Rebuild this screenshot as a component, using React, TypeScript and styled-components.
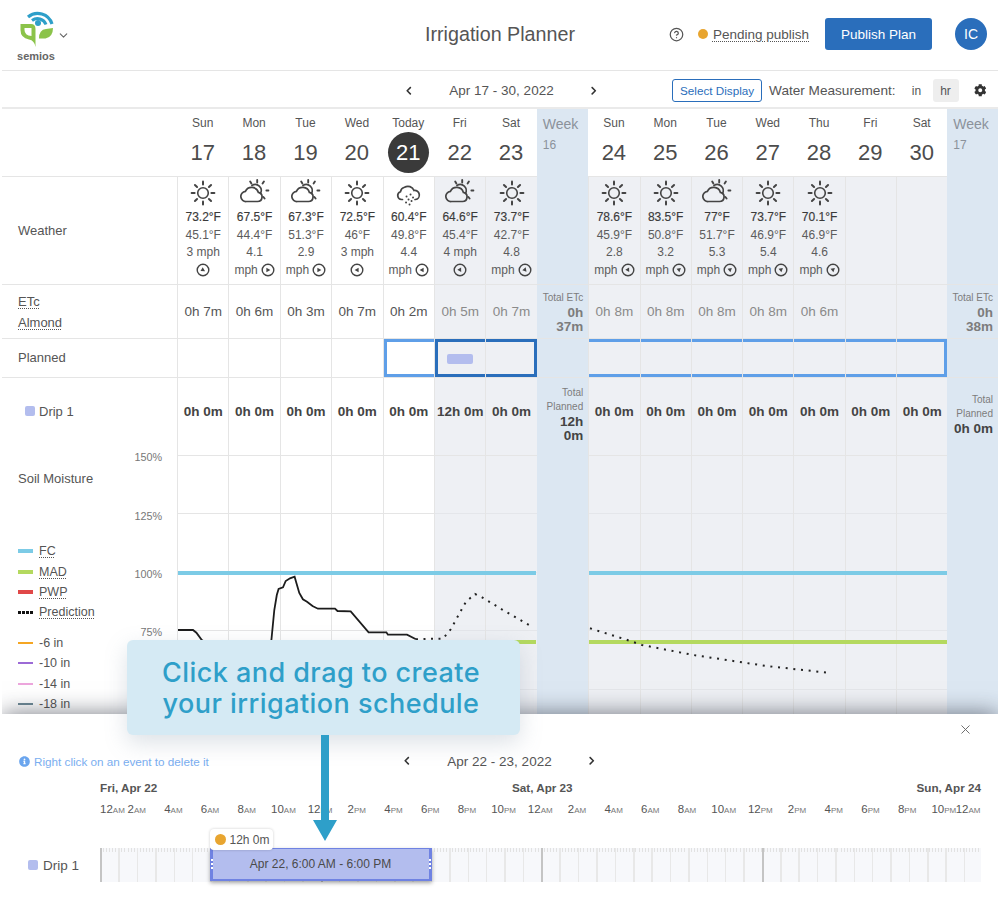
import styled, { createGlobalStyle } from "styled-components";
import { FaChevronLeft, FaChevronRight, FaCog, FaInfoCircle } from "react-icons/fa";
import { ChevronDown, CircleHelp, X } from "lucide-react";

const GlobalStyle = createGlobalStyle`
  body {
    margin: 0;
    background: #fff;
    font-family: "Liberation Sans", Arial, sans-serif;
    color: #4c4c4c;
  }
`;

const BLUE = "#2a6ebb";
const LIGHT_BLUE = "#5f9fe8";
const SHADE = "#eef0f4";
const WEEK = "#dce7f2";
const LINE = "#e5e5e5";
const DRIP = "#b3bdee";
const COLUMNS = "175px repeat(7, 51.4px) 51.5px repeat(7, 51.3px) 1fr";

const Page = styled.div`
  position: relative;
  width: 996px;
  height: 900px;
  margin-left: 2px;
  display: flex;
  flex-direction: column;
  overflow: hidden;
`;

const Header = styled.header`
  height: 70px;
  flex: none;
  display: grid;
  grid-template-columns: 1fr auto 1fr;
  align-items: center;
  border-bottom: 1px solid ${LINE};
`;

const Brand = styled.div`
  display: flex;
  align-items: center;
  gap: 2px;
  padding-left: 15px;
`;

const LogoBox = styled.div`
  width: 38px;
  display: flex;
  flex-direction: column;
  align-items: center;
  gap: 2px;
`;

const LogoName = styled.span`
  font-size: 11px;
  font-weight: bold;
  line-height: 12px;
  color: #666;
`;

const Title = styled.h1`
  margin: 0 0 2px;
  font-size: 19.7px;
  font-weight: normal;
  color: #555;
`;

const HeaderRight = styled.div`
  display: flex;
  align-items: center;
  justify-content: flex-end;
  padding-right: 11px;
  margin-bottom: 2px;
`;

const StatusDot = styled.span`
  width: 10px;
  height: 10px;
  border-radius: 50%;
  background: #e8a530;
  margin: 0 5px 0 14px;
`;

const DottedText = styled.span`
  text-decoration: underline dotted;
  text-underline-offset: 2px;
  text-decoration-thickness: 1px;
`;

const PendingText = styled(DottedText)`
  font-size: 13.5px;
  color: #555;
`;

const PublishButton = styled.button`
  width: 107px;
  height: 32px;
  margin-left: 16px;
  border: none;
  border-radius: 3px;
  background: ${BLUE};
  color: #fff;
  font: 13.5px "Liberation Sans", Arial, sans-serif;
`;

const Avatar = styled.div`
  width: 32px;
  height: 32px;
  margin-left: 23px;
  border-radius: 50%;
  background: ${BLUE};
  color: #fff;
  font-size: 14px;
  display: flex;
  align-items: center;
  justify-content: center;
`;

const Toolbar = styled.div`
  height: 38px;
  box-sizing: border-box;
  padding-top: 3px;
  flex: none;
  display: grid;
  grid-template-columns: 1fr 198px 1fr;
  align-items: center;
  border-bottom: 2px solid #eaeaea;
`;

const DateNav = styled.div`
  display: flex;
  align-items: center;
  justify-content: space-between;
  font-size: 13.5px;
  color: #555;
  padding: 0 2px 0 1px;
`;

const ToolbarNav = styled(DateNav)`
  padding: 0 0 0 3px;
`;

const NavIcon = styled.span`
  display: flex;
  color: #333;
  font-size: 9.5px;
`;

const ToolbarRight = styled.div`
  display: flex;
  align-items: center;
  justify-content: flex-end;
  padding-right: 12px;
`;

const DisplayButton = styled.button`
  height: 23px;
  width: 90px;
  padding: 0;
  background: #fff;
  border: 1px solid ${BLUE};
  border-radius: 3px;
  color: ${BLUE};
  font: 11.7px "Liberation Sans", Arial, sans-serif;
`;

const MeasureLabel = styled.span`
  margin-left: 7px;
  font-size: 13.6px;
  color: #555;
`;

const UnitButton = styled.span<{ $active?: boolean }>`
  width: 26px;
  height: 23px;
  border-radius: 3px;
  background: ${(p) => (p.$active ? "#eee" : "transparent")};
  font-size: 12px;
  color: #555;
  display: flex;
  align-items: center;
  justify-content: center;
  margin-left: ${(p) => (p.$active ? "3px" : "8px")};
`;

const GearBox = styled.span`
  display: flex;
  margin-left: 15px;
  font-size: 12.5px;
  color: #333;
`;

const Planner = styled.div`
  flex: 1;
  min-height: 0;
  display: flex;
  flex-direction: column;
`;

const Row = styled.div<{ $height?: number }>`
  display: grid;
  grid-template-columns: ${COLUMNS};
  flex: ${(p) => (p.$height ? "none" : "1")};
  height: ${(p) => (p.$height ? `${p.$height}px` : "auto")};
  position: relative;
`;

const RowLabel = styled.div<{ $indent?: boolean }>`
  display: flex;
  align-items: center;
  gap: 4px;
  padding-left: ${(p) => (p.$indent ? "23px" : "16px")};
  font-size: 13px;
  color: #555;
  border-bottom: 1px solid ${LINE};
`;

const PlannedLabel = styled(RowLabel)`
  align-items: flex-start;
  padding-top: 11px;
`;

const DripLabel = styled(RowLabel)`
  border-bottom: none;
  padding-bottom: 12px;
`;

const EtcLabel = styled(RowLabel)`
  flex-direction: column;
  align-items: flex-start;
  justify-content: center;
  gap: 6px;
`;

const Swatch = styled.span`
  width: 10px;
  height: 10px;
  border-radius: 2px;
  background: ${DRIP};
`;

const DayHeadCell = styled.div`
  display: flex;
  flex-direction: column;
  align-items: center;
  border-bottom: 1px solid ${LINE};
`;

const DayName = styled.span`
  margin-top: 7px;
  font-size: 12px;
  line-height: 14px;
  color: #555;
`;

const DayNumber = styled.span<{ $today?: boolean }>`
  width: 41px;
  height: 41px;
  margin-top: 2px;
  border-radius: 50%;
  display: flex;
  align-items: center;
  justify-content: center;
  font-size: 22px;
  color: ${(p) => (p.$today ? "#fff" : "#4c4c4c")};
  background: ${(p) => (p.$today ? "#3a3a3a" : "transparent")};
`;

const WeekHead = styled.div`
  background: ${WEEK};
  padding: 7px 0 0 6px;
  color: #8b929b;
  font-size: 14px;
  line-height: 16px;
`;

const WeekNumber = styled.div`
  margin-top: 5px;
  font-size: 12px;
`;

const Cell = styled.div<{ $shade?: boolean; $noBottom?: boolean }>`
  background: ${(p) => (p.$shade ? SHADE : "#fff")};
  border-left: 1px solid ${LINE};
  border-bottom: ${(p) => (p.$noBottom ? "none" : `1px solid ${LINE}`)};
  display: flex;
  flex-direction: column;
  align-items: center;
  justify-content: center;
  min-width: 0;
`;

const WeatherCell = styled(Cell)`
  justify-content: flex-start;
  padding-top: 2px;
`;

const WeatherLine = styled.div<{ $strong?: boolean }>`
  display: flex;
  align-items: center;
  gap: 3px;
  height: 17.7px;
  font-size: 12px;
  white-space: nowrap;
  color: ${(p) => (p.$strong ? "#3a3a3a" : "#5c5c5c")};
  -webkit-text-stroke: ${(p) => (p.$strong ? "0.15px" : "0")};
`;

const IconSlot = styled.div`
  height: 28px;
  margin-bottom: 1px;
`;

const EtcValue = styled.span<{ $muted?: boolean }>`
  font-size: 13.5px;
  color: ${(p) => (p.$muted ? "#8a8a8a" : "#555")};
`;

const PlanCell = styled(Cell)<{ $frame?: string; $edges?: string }>`
  box-shadow: ${(p) => {
    if (!p.$frame) return "none";
    const shadows = [`inset 0 3px 0 ${p.$frame}`, `inset 0 -3px 0 ${p.$frame}`];
    if (p.$edges?.includes("l")) shadows.push(`inset 3px 0 0 ${p.$frame}`);
    if (p.$edges?.includes("r")) shadows.push(`inset -3px 0 0 ${p.$frame}`);
    return shadows.join(", ");
  }};
`;

const MiniEvent = styled.span`
  width: 26px;
  height: 10px;
  margin: 1px 0 0 -1px;
  border-radius: 2px;
  background: ${DRIP};
`;

const HoursValue = styled.span`
  font-size: 13.5px;
  font-weight: bold;
  white-space: nowrap;
  color: #444;
  margin-bottom: 10px;
`;

const WeekCell = styled.div<{ $line?: boolean; $top?: number; $bottom?: number }>`
  background: ${WEEK};
  border-bottom: ${(p) => (p.$line ? `1px solid ${LINE}` : "none")};
  padding: ${(p) => p.$top ?? 0}px 5px ${(p) => p.$bottom ?? 0}px 0;
  display: flex;
  flex-direction: column;
  align-items: flex-end;
  justify-content: center;
  text-align: right;
`;

const TotalCaption = styled.div`
  font-size: 10px;
  line-height: 14.5px;
  color: #7c7c7c;
  white-space: nowrap;
`;

const TotalValue = styled.div<{ $muted?: boolean }>`
  font-size: 13.5px;
  font-weight: bold;
  line-height: 14px;
  color: ${(p) => (p.$muted ? "#7c7c7c" : "#444")};
`;

const ChartLabel = styled.div`
  display: flex;
  justify-content: space-between;
  padding: 0 15px 0 16px;
  font-size: 13px;
  color: #555;
`;

const Legend = styled.div`
  display: flex;
  flex-direction: column;
`;

const LegendTitle = styled.div`
  margin-top: 15px;
  margin-bottom: 55px;
`;

const LegendItem = styled.div<{ $gapBefore?: boolean }>`
  height: 20.4px;
  display: flex;
  align-items: center;
  gap: 6px;
  font-size: 12.5px;
  margin-top: ${(p) => (p.$gapBefore ? "10px" : "0")};
  white-space: nowrap;
`;

const LegendMark = styled.span<{ $color: string; $size: number; $dotted?: boolean }>`
  width: 15px;
  height: ${(p) => p.$size}px;
  background: ${(p) =>
    p.$dotted
      ? `repeating-linear-gradient(90deg, ${p.$color} 0 3px, transparent 3px 4px)`
      : p.$color};
`;

const Axis = styled.div`
  margin-top: -28px;
  display: flex;
  flex-direction: column;
  align-items: flex-end;
`;

const AxisTick = styled.div`
  height: 58.4px;
  display: flex;
  align-items: center;
  font-size: 10.8px;
  color: #777;
`;

const ChartCell = styled.div<{ $shade?: boolean }>`
  border-left: 1px solid ${LINE};
  background-color: ${(p) => (p.$shade ? SHADE : "#fff")};
  background-image: repeating-linear-gradient(
    180deg,
    transparent 0 57.4px,
    ${(p) => (p.$shade ? "#e4e6ea" : LINE)} 57.4px 58.4px
  );
`;

const WeekFill = styled.div`
  background: ${WEEK};
`;

const ChartOverlay = styled.svg`
  position: absolute;
  left: 176px;
  top: 0;
  pointer-events: none;
`;

const Panel = styled.section`
  position: relative;
  z-index: 1;
  height: 186px;
  flex: none;
  background: #fff;
  box-shadow: 0 0 22px rgba(30, 35, 50, 0.6);
  display: flex;
  flex-direction: column;
`;

const CloseRow = styled.div`
  height: 34px;
  box-sizing: border-box;
  padding: 8px 25px 0 0;
  display: flex;
  align-items: flex-start;
  justify-content: flex-end;
  color: #666;
`;

const PanelInfoRow = styled.div`
  height: 24px;
  margin-top: 1px;
  display: grid;
  grid-template-columns: 1fr 198px 1fr;
  align-items: center;
`;

const Hint = styled.div`
  display: flex;
  align-items: center;
  gap: 4px;
  padding-left: 17px;
  font-size: 11.7px;
  color: #7aaef0;
`;

const HintIcon = styled.span`
  display: flex;
  font-size: 11px;
  color: #6aa5ee;
`;

const TimeScale = styled.div`
  margin: 8px 17px 0 98px;
`;

const DateLabels = styled.div`
  display: grid;
  grid-template-columns: 412px 1fr auto;
  font-size: 11.7px;
  font-weight: bold;
  line-height: 14px;
  color: #555;
`;

const Hours = styled.div`
  display: grid;
  grid-template-columns: 18.35px repeat(23, 36.7px) 18.35px;
  margin-top: 6px;
  height: 16px;
`;

const HourLabel = styled.span<{ $align: string }>`
  justify-self: ${(p) => p.$align};
  white-space: nowrap;
  font-size: 11.5px;
  line-height: 16px;
  color: #555;
`;

const HourSuffix = styled.span`
  font-size: 8px;
  color: #777;
`;

const TrackRow = styled.div`
  display: flex;
  align-items: center;
  margin-top: 31px;
`;

const TrackLabel = styled.div`
  width: 98px;
  flex: none;
  display: flex;
  align-items: center;
  gap: 5px;
  padding-left: 26px;
  font-size: 13.5px;
  color: #555;
  box-sizing: border-box;
`;

const Track = styled.div`
  position: relative;
  width: 881px;
  height: 34px;
  background-color: #f7f8fb;
  background-repeat: repeat, repeat, no-repeat;
  background-size: auto, auto, 100% 4px;
  background-image:
    repeating-linear-gradient(90deg, #c4c4c4 0 2px, transparent 2px 220.56px),
    repeating-linear-gradient(90deg, #e8e8e8 0 1.5px, transparent 1.5px 18.38px),
    repeating-linear-gradient(90deg, #e2e2e2 0 1px, transparent 1px 3.06px);
`;

const EventBlock = styled.div`
  position: absolute;
  left: 109.5px;
  top: 0;
  width: 222px;
  height: 33px;
  box-sizing: border-box;
  background: ${DRIP};
  border: solid #6f82e2;
  border-width: 1px 3px 2px;
  box-shadow: 0 2px 4px rgba(0, 0, 0, 0.35);
  display: flex;
  align-items: center;
  justify-content: center;
  font-size: 12px;
  color: #4a4a4a;
`;

const Handle = styled.span<{ $side: "left" | "right" }>`
  position: absolute;
  top: 10px;
  ${(p) => p.$side}: -2px;
  width: 2px;
  height: 10px;
  background: repeating-linear-gradient(180deg, #fff 0 2px, transparent 2px 4px);
`;

const DurationBadge = styled.div`
  position: absolute;
  left: -3px;
  top: -20px;
  height: 21px;
  width: 63px;
  box-sizing: border-box;
  padding-left: 5px;
  border-radius: 4px;
  background: #fff;
  box-shadow: 0 0 3px rgba(0, 0, 0, 0.2);
  display: flex;
  align-items: center;
  gap: 4px;
  font-size: 12px;
  color: #555;
  white-space: nowrap;
`;

const BadgeDot = styled.span`
  width: 11px;
  height: 11px;
  border-radius: 50%;
  background: #e8a530;
`;

const Callout = styled.div`
  position: absolute;
  z-index: 2;
  left: 125px;
  top: 640px;
  width: 393px;
  height: 95px;
  box-sizing: border-box;
  padding-right: 5px;
  border-radius: 6px;
  background: #d5eaf4;
  box-shadow: 0 8px 22px rgba(120, 140, 160, 0.25);
  display: flex;
  align-items: center;
  justify-content: center;
  text-align: center;
  font-family: Inter, "Open Sans", sans-serif;
  font-size: 27px;
  font-weight: 500;
  letter-spacing: 0.45px;
  line-height: 31px;
  color: #2e9fc9;
`;

const ArrowDrawing = styled.svg`
  position: absolute;
  z-index: 2;
  left: 308px;
  top: 735px;
`;

type Wx = { icon: string; hi: string; lo: string; wind: string; unit: boolean; dir: number };

const week1: { name: string; num: number; wx: Wx; etc: string; hours: string }[] = [
  { name: "Sun", num: 17, etc: "0h 7m", hours: "0h 0m", wx: { icon: "sun", hi: "73.2°F", lo: "45.1°F", wind: "3 mph", unit: false, dir: 30 } },
  { name: "Mon", num: 18, etc: "0h 6m", hours: "0h 0m", wx: { icon: "partly", hi: "67.5°F", lo: "44.4°F", wind: "4.1", unit: true, dir: 0 } },
  { name: "Tue", num: 19, etc: "0h 3m", hours: "0h 0m", wx: { icon: "partly", hi: "67.3°F", lo: "51.3°F", wind: "2.9", unit: true, dir: 0 } },
  { name: "Wed", num: 20, etc: "0h 7m", hours: "0h 0m", wx: { icon: "sun", hi: "72.5°F", lo: "46°F", wind: "3 mph", unit: false, dir: 180 } },
  { name: "Today", num: 21, etc: "0h 2m", hours: "0h 0m", wx: { icon: "rain", hi: "60.4°F", lo: "49.8°F", wind: "4.4", unit: true, dir: 180 } },
  { name: "Fri", num: 22, etc: "0h 5m", hours: "12h 0m", wx: { icon: "partly", hi: "64.6°F", lo: "45.4°F", wind: "4 mph", unit: false, dir: 60 } },
  { name: "Sat", num: 23, etc: "0h 7m", hours: "0h 0m", wx: { icon: "sun", hi: "73.7°F", lo: "42.7°F", wind: "4.8", unit: true, dir: 50 } },
];

const week2: { name: string; num: number; wx?: Wx; etc?: string; hours: string }[] = [
  { name: "Sun", num: 24, etc: "0h 8m", hours: "0h 0m", wx: { icon: "sun", hi: "78.6°F", lo: "45.9°F", wind: "2.8", unit: true, dir: 60 } },
  { name: "Mon", num: 25, etc: "0h 8m", hours: "0h 0m", wx: { icon: "sun", hi: "83.5°F", lo: "50.8°F", wind: "3.2", unit: true, dir: 80 } },
  { name: "Tue", num: 26, etc: "0h 8m", hours: "0h 0m", wx: { icon: "partly", hi: "77°F", lo: "51.7°F", wind: "5.3", unit: true, dir: 80 } },
  { name: "Wed", num: 27, etc: "0h 8m", hours: "0h 0m", wx: { icon: "sun", hi: "73.7°F", lo: "46.9°F", wind: "5.4", unit: true, dir: 80 } },
  { name: "Thu", num: 28, etc: "0h 6m", hours: "0h 0m", wx: { icon: "sun", hi: "70.1°F", lo: "46.9°F", wind: "4.6", unit: true, dir: 80 } },
  { name: "Fri", num: 29, hours: "0h 0m" },
  { name: "Sat", num: 30, hours: "0h 0m" },
];

const hourMarks = [
  "12AM", "2AM", "4AM", "6AM", "8AM", "10AM", "12PM", "2PM", "4PM", "6PM", "8PM", "10PM",
  "12AM", "2AM", "4AM", "6AM", "8AM", "10AM", "12PM", "2PM", "4PM", "6PM", "8PM", "10PM", "12AM",
];

const legend = [
  { label: "FC", color: "#7ccbe6", size: 4, abbr: true },
  { label: "MAD", color: "#b4d95f", size: 4, abbr: true },
  { label: "PWP", color: "#e04848", size: 4, abbr: true },
  { label: "Prediction", color: "#111", size: 3, abbr: true, dotted: true },
  { label: "-6 in", color: "#f5a623", size: 2, gap: true },
  { label: "-10 in", color: "#9c6ad6", size: 2 },
  { label: "-14 in", color: "#eda6dd", size: 2 },
  { label: "-18 in", color: "#6e8a96", size: 2 },
];

const soilLine =
  "M178 630 L193 630 L196.4 632.7 L201.8 640 L230 660 L262 660 L271.4 640 L274.3 610 L276.8 595 L278.6 589 L283 587.3 L285.7 581 L290 578.3 L294.6 576.7 L296.4 583 L299.3 593 L302.9 599.3 L307 601.7 L312.5 606 L317.9 608.7 L335 608.7 L337.5 611 L350.7 611.3 L368.6 632.3 L386.4 632.3 L387.9 634.7 L407 634.7 L416 639.3";
const predictionA =
  "M416 639.3 L425 639 L434 638.7 L442.9 638.7 L450.7 629.3 L458.2 615.7 L466 601.7 L475 594 L482 597.3 L501.8 609.3 L530.4 625.7";
const predictionB = "M590 628.3 L627.3 640 L642 645 L693.3 655 L766.7 666 L827.7 672.7";

const SunIcon = () => (
  <svg width="30" height="28" viewBox="-15 -14 30 28" fill="none" stroke="#444">
    <circle r="5.3" strokeWidth="1.6" />
    {[0, 45, 90, 135, 180, 225, 270, 315].map((a) => (
      <line key={a} x1="8.4" x2="11.4" transform={`rotate(${a})`} strokeWidth="2" strokeLinecap="round" />
    ))}
  </svg>
);

const PartlyIcon = () => (
  <svg width="30" height="28" viewBox="239.6 178.5 30 28" fill="none" stroke="#444" strokeLinecap="round">
    <path d="M246 201 H257 a4.6 4.6 0 0 0 1 -9.1 a7 7 0 0 0 -13 -1 a5 5 0 0 0 1 10.1 Z" strokeWidth="1.7" />
    <path d="M251.5 185 a6 6 0 0 1 8.5 8" strokeWidth="1.6" />
    <path
      d="M256.8 179.5 V182 M249.8 181 L251 183 M263.5 181 L262.2 183 M266 190 H268 M263 196.5 L264.2 198"
      strokeWidth="1.9"
    />
  </svg>
);

const RainIcon = () => (
  <svg width="30" height="28" viewBox="393 179 30 28" fill="none" stroke="#444" strokeLinecap="round">
    <path
      d="M401.5 199.5 H400.5 a4 4 0 0 1 -1 -7.8 a5.5 5.5 0 0 1 4 -4.4 a6.5 6.5 0 0 1 9.5 3.2 a4.5 4.5 0 0 1 1.5 9 H414"
      strokeWidth="1.7"
    />
    <path
      d="M405.5 196.5 h.1 M409.5 194.5 h.1 M412 197.5 h.1 M407.5 199.5 h.1 M410.5 201 h.1 M405 202.5 h.1 M408.5 204.5 h.1"
      strokeWidth="1.9"
    />
  </svg>
);

const WeatherIcon = ({ kind }: { kind: string }) => {
  if (kind === "partly") return <PartlyIcon />;
  if (kind === "rain") return <RainIcon />;
  return <SunIcon />;
};

const WindIcon = ({ dir }: { dir: number }) => (
  <svg width="14" height="14" viewBox="-7 -7 14 14">
    <circle r="5.8" fill="none" stroke="#444" strokeWidth="1.4" />
    <path d="M-1.6 -2.2 L2.4 0 L-1.6 2.2 Z" fill="#444" transform={`rotate(${dir})`} />
  </svg>
);

const Logo = () => (
  <svg width="37" height="40" viewBox="17 8 37 40">
    <path d="M27 17 A15 15 0 0 1 51 24" fill="none" stroke="#2e9fc9" strokeWidth="3.2" />
    <path d="M31 20.5 A9 9 0 0 1 45 24.5" fill="none" stroke="#2e9fc9" strokeWidth="3" />
    <circle cx="37" cy="23" r="3" fill="#2e9fc9" />
    <path d="M19.5 24 H30 Q34.5 24 34.5 29 V47 Q33.5 40.5 28 39.5 Q19.5 38 19.5 30 Z" fill="#8bc34a" />
    <path d="M23.5 28 H30.5 V36 Q23.5 35.5 23.5 30 Z" fill="#fff" />
    <path d="M38 38.5 Q38 29.5 45 29 L52 28 Q52 37 44.5 38.5 Z" fill="#8bc34a" />
  </svg>
);

const WeatherContent = ({ wx }: { wx: Wx }) => (
  <>
    <IconSlot>
      <WeatherIcon kind={wx.icon} />
    </IconSlot>
    <WeatherLine $strong>{wx.hi}</WeatherLine>
    <WeatherLine>{wx.lo}</WeatherLine>
    <WeatherLine>{wx.wind}</WeatherLine>
    <WeatherLine>
      {wx.unit && "mph"}
      <WindIcon dir={wx.dir} />
    </WeatherLine>
  </>
);

const App = () => {
  return (
    <>
      <GlobalStyle />
      <Page>
        <Header>
          <Brand>
            <LogoBox>
              <Logo />
              <LogoName>semios</LogoName>
            </LogoBox>
            <ChevronDown size={13} color="#666" />
          </Brand>
          <Title>Irrigation Planner</Title>
          <HeaderRight>
            <CircleHelp size={15} color="#555" />
            <StatusDot />
            <PendingText>Pending publish</PendingText>
            <PublishButton>Publish Plan</PublishButton>
            <Avatar>IC</Avatar>
          </HeaderRight>
        </Header>

        <Toolbar>
          <span />
          <ToolbarNav>
            <NavIcon>
              <FaChevronLeft />
            </NavIcon>
            Apr 17 - 30, 2022
            <NavIcon>
              <FaChevronRight />
            </NavIcon>
          </ToolbarNav>
          <ToolbarRight>
            <DisplayButton>Select Display</DisplayButton>
            <MeasureLabel>Water Measurement:</MeasureLabel>
            <UnitButton>in</UnitButton>
            <UnitButton $active>hr</UnitButton>
            <GearBox>
              <FaCog />
            </GearBox>
          </ToolbarRight>
        </Toolbar>

        <Planner>
          <Row $height={68}>
            <DayHeadCell />
            {week1.map((d) => (
              <DayHeadCell key={d.num}>
                <DayName>{d.name}</DayName>
                <DayNumber $today={d.num === 21}>{d.num}</DayNumber>
              </DayHeadCell>
            ))}
            <WeekHead>
              Week
              <WeekNumber>16</WeekNumber>
            </WeekHead>
            {week2.map((d) => (
              <DayHeadCell key={d.num}>
                <DayName>{d.name}</DayName>
                <DayNumber>{d.num}</DayNumber>
              </DayHeadCell>
            ))}
            <WeekHead>
              Week
              <WeekNumber>17</WeekNumber>
            </WeekHead>
          </Row>

          <Row $height={108}>
            <RowLabel>Weather</RowLabel>
            {week1.map((d) => (
              <WeatherCell key={d.num} $shade={d.num > 21}>
                <WeatherContent wx={d.wx} />
              </WeatherCell>
            ))}
            <WeekCell $line />
            {week2.map((d) => (
              <WeatherCell key={d.num} $shade>
                {d.wx && <WeatherContent wx={d.wx} />}
              </WeatherCell>
            ))}
            <WeekCell $line />
          </Row>

          <Row $height={54}>
            <EtcLabel>
              <DottedText>ETc</DottedText>
              <DottedText>Almond</DottedText>
            </EtcLabel>
            {week1.map((d) => (
              <Cell key={d.num} $shade={d.num > 21}>
                <EtcValue $muted={d.num > 21}>{d.etc}</EtcValue>
              </Cell>
            ))}
            <WeekCell $line $top={2}>
              <TotalCaption>Total ETc</TotalCaption>
              <TotalValue $muted>0h</TotalValue>
              <TotalValue $muted>37m</TotalValue>
            </WeekCell>
            {week2.map((d) => (
              <Cell key={d.num} $shade>
                <EtcValue $muted>{d.etc}</EtcValue>
              </Cell>
            ))}
            <WeekCell $line $top={2}>
              <TotalCaption>Total ETc</TotalCaption>
              <TotalValue $muted>0h</TotalValue>
              <TotalValue $muted>38m</TotalValue>
            </WeekCell>
          </Row>

          <Row $height={39}>
            <PlannedLabel>Planned</PlannedLabel>
            {week1.map((d) => (
              <PlanCell
                key={d.num}
                $shade={d.num > 21}
                $frame={d.num === 21 ? LIGHT_BLUE : d.num > 21 ? BLUE : undefined}
                $edges={d.num === 21 ? "l" : d.num === 22 ? "l" : d.num === 23 ? "r" : ""}
              >
                {d.num === 22 && <MiniEvent />}
              </PlanCell>
            ))}
            <WeekCell $line />
            {week2.map((d) => (
              <PlanCell key={d.num} $shade $frame={LIGHT_BLUE} $edges={d.num === 30 ? "r" : ""} />
            ))}
            <WeekCell $line />
          </Row>

          <Row $height={78}>
            <DripLabel $indent>
              <Swatch />
              Drip 1
            </DripLabel>
            {week1.map((d) => (
              <Cell key={d.num} $shade={d.num > 21}>
                <HoursValue>{d.hours}</HoursValue>
              </Cell>
            ))}
            <WeekCell $bottom={6}>
              <TotalCaption>Total</TotalCaption>
              <TotalCaption>Planned</TotalCaption>
              <TotalValue>12h</TotalValue>
              <TotalValue>0m</TotalValue>
            </WeekCell>
            {week2.map((d) => (
              <Cell key={d.num} $shade>
                <HoursValue>{d.hours}</HoursValue>
              </Cell>
            ))}
            <WeekCell $bottom={6}>
              <TotalCaption>Total</TotalCaption>
              <TotalCaption>Planned</TotalCaption>
              <TotalValue>0h 0m</TotalValue>
            </WeekCell>
          </Row>

          <Row>
            <ChartLabel>
              <Legend>
                <LegendTitle>Soil Moisture</LegendTitle>
                {legend.map((item) => (
                  <LegendItem key={item.label} $gapBefore={item.gap}>
                    <LegendMark $color={item.color} $size={item.size} $dotted={item.dotted} />
                    {item.abbr ? <DottedText>{item.label}</DottedText> : item.label}
                  </LegendItem>
                ))}
              </Legend>
              <Axis>
                {["150%", "125%", "100%", "75%"].map((t) => (
                  <AxisTick key={t}>{t}</AxisTick>
                ))}
              </Axis>
            </ChartLabel>
            {week1.map((d) => (
              <ChartCell key={d.num} $shade={d.num > 21} />
            ))}
            <WeekFill />
            {week2.map((d) => (
              <ChartCell key={d.num} $shade />
            ))}
            <WeekFill />
            <ChartOverlay width="770" height="258" viewBox="178 456 770 258" fill="none">
              <path d="M178 573 H536 M589 573 H947" stroke="#7ccbe6" strokeWidth="4" />
              <path d="M178 642 H536 M589 642 H947" stroke="#b4d95f" strokeWidth="4" />
              <path d={soilLine} stroke="#1c1c1c" strokeWidth="1.8" />
              <path d={predictionA} stroke="#222" strokeWidth="2" strokeDasharray="2 5.5" />
              <path d={predictionB} stroke="#222" strokeWidth="2" strokeDasharray="2 5.7" />
            </ChartOverlay>
          </Row>
        </Planner>

        <Panel>
          <CloseRow>
            <X size={15} strokeWidth={1.5} />
          </CloseRow>
          <PanelInfoRow>
            <Hint>
              <HintIcon>
                <FaInfoCircle />
              </HintIcon>
              Right click on an event to delete it
            </Hint>
            <DateNav>
              <NavIcon>
                <FaChevronLeft />
              </NavIcon>
              Apr 22 - 23, 2022
              <NavIcon>
                <FaChevronRight />
              </NavIcon>
            </DateNav>
            <span />
          </PanelInfoRow>
          <TimeScale>
            <DateLabels>
              <span>Fri, Apr 22</span>
              <span>Sat, Apr 23</span>
              <span>Sun, Apr 24</span>
            </DateLabels>
            <Hours>
              {hourMarks.map((mark, i) => (
                <HourLabel key={i} $align={i === 0 ? "start" : i === hourMarks.length - 1 ? "end" : "center"}>
                  {mark.slice(0, -2)}
                  <HourSuffix>{mark.slice(-2)}</HourSuffix>
                </HourLabel>
              ))}
            </Hours>
          </TimeScale>
          <TrackRow>
            <TrackLabel>
              <Swatch />
              Drip 1
            </TrackLabel>
            <Track>
              <EventBlock>
                <Handle $side="left" />
                Apr 22, 6:00 AM - 6:00 PM
                <Handle $side="right" />
                <DurationBadge>
                  <BadgeDot />
                  12h 0m
                </DurationBadge>
              </EventBlock>
            </Track>
          </TrackRow>
        </Panel>

        <Callout>
          Click and drag to create
          <br />
          your irrigation schedule
        </Callout>
        <ArrowDrawing width="30" height="107" viewBox="0 0 30 107">
          <path d="M11 0 H19 V85 H27 L15 106 L3 85 H11 Z" fill="#2e9fc9" />
        </ArrowDrawing>
      </Page>
    </>
  );
};

export default App;
